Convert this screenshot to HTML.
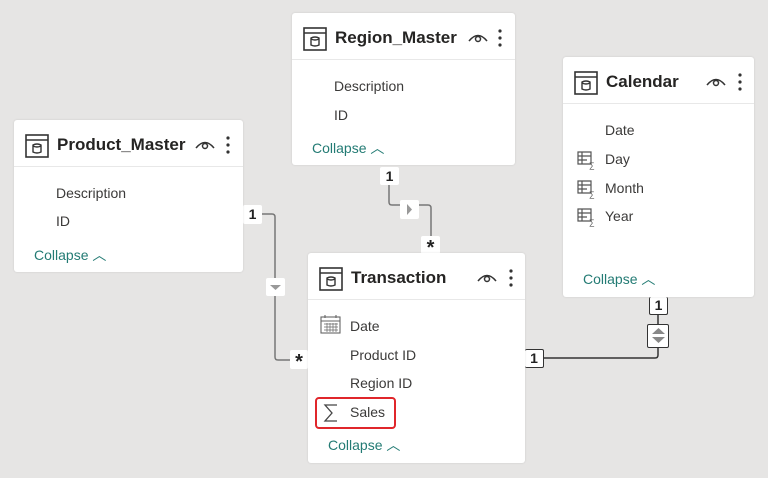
<!DOCTYPE html>
<html><head><meta charset="utf-8"><style>
*{margin:0;padding:0;box-sizing:border-box}
body{width:768px;height:478px;background:#e6e5e4;position:relative;overflow:hidden;font-family:"Segoe UI","Liberation Sans",sans-serif}
.card{position:absolute;background:#fff;border-radius:3px;box-shadow:0 0 2px rgba(0,0,0,.12)}
.hd{position:absolute;left:0;right:0;top:46px;border-top:1px solid #e8e8e8}
.t{position:absolute;font-size:17px;font-weight:bold;color:#252423;line-height:20px;top:15px;left:43px}
.f{position:absolute;font-size:14px;color:#3b3a39;line-height:18px;left:42px}
.c{position:absolute;font-size:14px;color:#237b74;line-height:18px;left:20px}
.ti{position:absolute;left:11px;top:14px}
.eye{position:absolute;top:17px}
.lb{position:absolute;background:#fff;font-size:14px;font-weight:bold;color:#222;text-align:center;line-height:18px;border-radius:2px}
svg.ln{position:absolute;left:0;top:0}
</style></head><body>
<svg class="ln" width="768" height="478">
<g fill="none" stroke="#777" stroke-width="1.5">
<path d="M262 214H272Q275 214 275 217V357Q275 360 278 360H290"/>
<path d="M389 185V202Q389 205 392 205H400M419 205H428Q431 205 431 208V237"/>
</g>
<path d="M658 315V355Q658 358 655 358H543" fill="none" stroke="#333" stroke-width="1.5"/>
</svg>
<!-- labels -->
<div class="lb" style="left:243px;top:205px;width:19px;height:19px">1</div>
<div class="lb" style="left:266px;top:278px;width:19px;height:18px"><svg width="19" height="18"><path d="M4 7H15L9.5 12Z" fill="#999"/></svg></div>
<div class="lb" style="left:290px;top:350px;width:18px;height:19px;font-size:20px;line-height:24px">*</div>
<div class="lb" style="left:380px;top:167px;width:19px;height:18px">1</div>
<div class="lb" style="left:400px;top:200px;width:19px;height:19px"><svg width="19" height="19"><path d="M7 4V15L12 9.5Z" fill="#999"/></svg></div>
<div class="lb" style="left:421px;top:236px;width:19px;height:18px;font-size:20px;line-height:24px">*</div>
<div class="lb" style="left:649px;top:297px;width:19px;height:18px;border:1.5px solid #333;border-top:none;line-height:16px">1</div>
<div class="lb" style="left:647px;top:324px;width:22px;height:24px;border:1.5px solid #333"><svg width="19" height="21"><path d="M3 9H16L9.5 3Z M3 12H16L9.5 18Z" fill="#888"/></svg></div>
<div class="lb" style="left:525px;top:349px;width:19px;height:19px;border:1.5px solid #333;border-left:none;line-height:17px">1</div>

<!-- Region_Master -->
<div class="card" style="left:292px;top:13px;width:223px;height:152px">
<svg class="ti" width="24" height="24" viewBox="0 0 24 24"><rect x="1" y="1" width="22" height="22" fill="none" stroke="#333" stroke-width="1.6"/><path d="M1 6H23" stroke="#333" stroke-width="1.6"/><path d="M8 11V18Q12 20 16 18V11Q12 9 8 11ZM8 12Q12 14 16 12" fill="none" stroke="#333" stroke-width="1.4"/></svg>
<div class="t">Region_Master</div>
<svg class="eye" style="left:175px" width="22" height="14"><path d="M2 11Q11 0 20 11" fill="none" stroke="#333" stroke-width="1.5"/><circle cx="11" cy="9" r="2.5" fill="none" stroke="#333" stroke-width="1.5"/></svg>
<svg class="eye" style="left:206px;top:16px" width="4" height="20"><circle cx="2" cy="2" r="1.6" fill="#333"/><circle cx="2" cy="9" r="1.6" fill="#333"/><circle cx="2" cy="16" r="1.6" fill="#333"/></svg>
<div class="hd"></div>
<div class="f" style="top:64px">Description</div>
<div class="f" style="top:93px">ID</div>
<div class="c" style="top:126px">Collapse ︿</div>
</div>

<!-- Product_Master -->
<div class="card" style="left:14px;top:120px;width:229px;height:152px">
<svg class="ti" width="24" height="24" viewBox="0 0 24 24"><rect x="1" y="1" width="22" height="22" fill="none" stroke="#333" stroke-width="1.6"/><path d="M1 6H23" stroke="#333" stroke-width="1.6"/><path d="M8 11V18Q12 20 16 18V11Q12 9 8 11ZM8 12Q12 14 16 12" fill="none" stroke="#333" stroke-width="1.4"/></svg>
<div class="t">Product_Master</div>
<svg class="eye" style="left:180px" width="22" height="14"><path d="M2 11Q11 0 20 11" fill="none" stroke="#333" stroke-width="1.5"/><circle cx="11" cy="9" r="2.5" fill="none" stroke="#333" stroke-width="1.5"/></svg>
<svg class="eye" style="left:212px;top:16px" width="4" height="20"><circle cx="2" cy="2" r="1.6" fill="#333"/><circle cx="2" cy="9" r="1.6" fill="#333"/><circle cx="2" cy="16" r="1.6" fill="#333"/></svg>
<div class="hd"></div>
<div class="f" style="top:64px">Description</div>
<div class="f" style="top:92px">ID</div>
<div class="c" style="top:126px">Collapse ︿</div>
</div>

<!-- Calendar -->
<div class="card" style="left:563px;top:57px;width:191px;height:240px">
<svg class="ti" width="24" height="24" viewBox="0 0 24 24"><rect x="1" y="1" width="22" height="22" fill="none" stroke="#333" stroke-width="1.6"/><path d="M1 6H23" stroke="#333" stroke-width="1.6"/><path d="M8 11V18Q12 20 16 18V11Q12 9 8 11ZM8 12Q12 14 16 12" fill="none" stroke="#333" stroke-width="1.4"/></svg>
<div class="t">Calendar</div>
<svg class="eye" style="left:142px" width="22" height="14"><path d="M2 11Q11 0 20 11" fill="none" stroke="#333" stroke-width="1.5"/><circle cx="11" cy="9" r="2.5" fill="none" stroke="#333" stroke-width="1.5"/></svg>
<svg class="eye" style="left:175px;top:16px" width="4" height="20"><circle cx="2" cy="2" r="1.6" fill="#333"/><circle cx="2" cy="9" r="1.6" fill="#333"/><circle cx="2" cy="16" r="1.6" fill="#333"/></svg>
<div class="hd"></div>
<div class="f" style="top:64px">Date</div>
<svg style="position:absolute;left:14px;top:94px" width="20" height="80"><g fill="none" stroke="#555" stroke-width="1.2"><path d="M1 1H14V13H1ZM1 5H14M5 1V13M1 9H10"/><path d="M1 30H14V42H1ZM1 34H14M5 30V42M1 38H10"/><path d="M1 58H14V70H1ZM1 62H14M5 58V70M1 66H10"/></g><g font-size="8" fill="#555" font-family="Liberation Sans"><text x="12" y="17">∑</text><text x="12" y="46">∑</text><text x="12" y="74">∑</text></g></svg>
<div class="f" style="top:93px">Day</div>
<div class="f" style="top:122px">Month</div>
<div class="f" style="top:150px">Year</div>
<div class="c" style="top:213px">Collapse ︿</div>
</div>

<!-- Transaction -->
<div class="card" style="left:308px;top:253px;width:217px;height:210px">
<svg class="ti" width="24" height="24" viewBox="0 0 24 24"><rect x="1" y="1" width="22" height="22" fill="none" stroke="#333" stroke-width="1.6"/><path d="M1 6H23" stroke="#333" stroke-width="1.6"/><path d="M8 11V18Q12 20 16 18V11Q12 9 8 11ZM8 12Q12 14 16 12" fill="none" stroke="#333" stroke-width="1.4"/></svg>
<div class="t">Transaction</div>
<svg class="eye" style="left:168px" width="22" height="14"><path d="M2 11Q11 0 20 11" fill="none" stroke="#333" stroke-width="1.5"/><circle cx="11" cy="9" r="2.5" fill="none" stroke="#333" stroke-width="1.5"/></svg>
<svg class="eye" style="left:201px;top:16px" width="4" height="20"><circle cx="2" cy="2" r="1.6" fill="#333"/><circle cx="2" cy="9" r="1.6" fill="#333"/><circle cx="2" cy="16" r="1.6" fill="#333"/></svg>
<div class="hd"></div>
<svg style="position:absolute;left:12px;top:62px" width="22" height="20"><g fill="none" stroke="#666" stroke-width="1.1"><rect x="1" y="2" width="19" height="16"/><path d="M1 6H20M5 0V3M16 0V3"/><path d="M4 9H18M4 12H18M4 15H18M7 8V17M10 8V17M13 8V17M16 8V17" stroke-width=".7"/></g></svg>
<div class="f" style="top:64px">Date</div>
<div class="f" style="top:93px">Product ID</div>
<div class="f" style="top:121px">Region ID</div>
<div style="position:absolute;left:7px;top:144px;width:81px;height:32px;border:2px solid #e0262b;border-radius:4px"></div>
<svg style="position:absolute;left:15px;top:150px" width="16" height="20"><path d="M14 2H2L9 10L2 18H14" fill="none" stroke="#444" stroke-width="1.3"/></svg>
<div class="f" style="top:150px">Sales</div>
<div class="c" style="top:183px">Collapse ︿</div>
</div>
</body></html>
